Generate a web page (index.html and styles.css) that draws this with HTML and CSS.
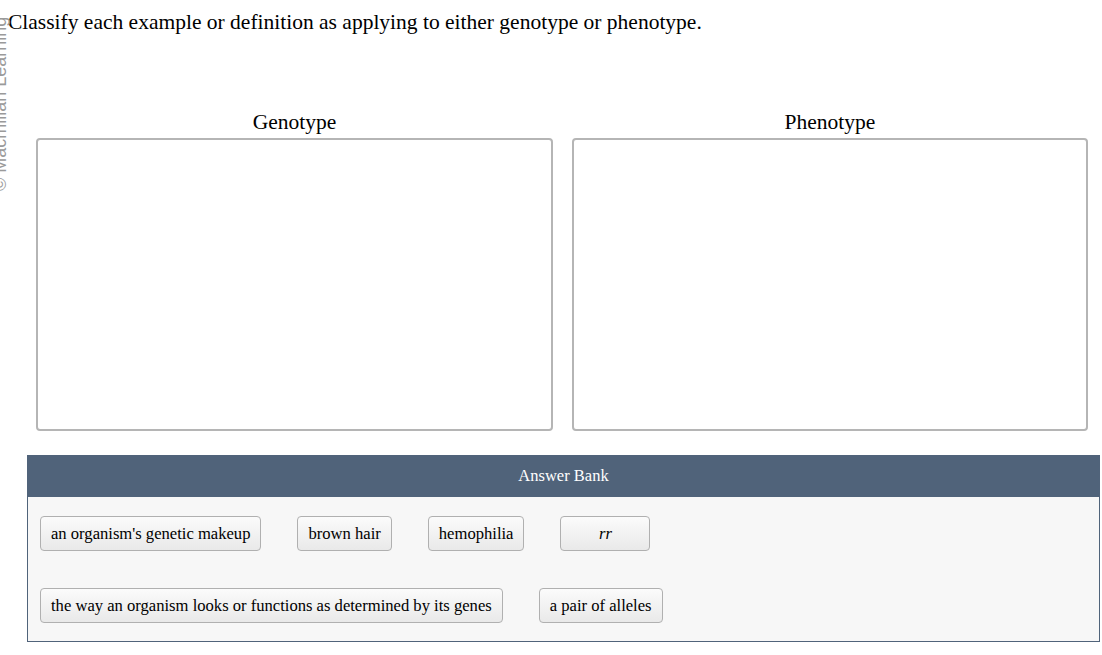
FILE: index.html
```html
<!DOCTYPE html>
<html>
<head>
<meta charset="utf-8">
<link rel="stylesheet" href="styles.css">
</head>
<body>
<div class="page">
  <div class="copyright">© Macmillan Learning</div>
  <h1 class="title">Classify each example or definition as applying to either genotype or phenotype.</h1>
  <div class="bins">
    <div class="bin">
      <div class="bin-label">Genotype</div>
      <div class="bin-box"></div>
    </div>
    <div class="bin">
      <div class="bin-label">Phenotype</div>
      <div class="bin-box"></div>
    </div>
  </div>
  <div class="bank">
    <div class="bank-head">Answer Bank</div>
    <div class="bank-body">
      <div class="chip">an organism's genetic makeup</div>
      <div class="chip">brown hair</div>
      <div class="chip">hemophilia</div>
      <div class="chip chip-rr"><i>rr</i></div>
      <div class="chip">the way an organism looks or functions as determined by its genes</div>
      <div class="chip">a pair of alleles</div>
    </div>
  </div>
</div>
</body>
</html>
```

FILE: styles.css
```css
html, body {
  margin: 0;
  padding: 0;
  background: #ffffff;
}
body {
  font-family: "Liberation Serif", "Times New Roman", serif;
  color: #000;
  overflow: hidden;
}
.page {
  position: relative;
  width: 1102px;
  height: 655px;
}
.copyright {
  position: absolute;
  left: -9px;
  top: 191px;
  transform-origin: 0 0;
  transform: rotate(-90deg);
  font-family: "Liberation Sans", Arial, sans-serif;
  font-size: 18px;
  line-height: 18px;
  color: #9a9a9a;
  white-space: nowrap;
}
.title {
  margin: 0;
  padding: 10px 0 0 8px;
  font-size: 21.5px;
  line-height: 25px;
  font-weight: normal;
}
.bins {
  display: grid;
  grid-template-columns: 517px 516px;
  column-gap: 19px;
  margin: 75px 0 0 36px;
}
.bin-label {
  text-align: center;
  font-size: 21.5px;
  line-height: 24px;
  margin-bottom: 4px;
}
.bin-box {
  height: 289px;
  border: 2px solid #b5b5b5;
  border-radius: 4px;
}
.bank {
  margin: 24px 0 0 27px;
  width: 1071px;
  border: 1px solid #50637a;
  border-top: none;
}
.bank-head {
  background: #50637a;
  color: #ffffff;
  height: 42px;
  line-height: 42px;
  text-align: center;
  font-size: 16.5px;
}
.bank-body {
  background: #f7f7f7;
  display: flex;
  flex-wrap: wrap;
  column-gap: 36px;
  row-gap: 37px;
  padding: 19px 12px 18px 12px;
}
.chip {
  height: 33px;
  line-height: 33px;
  padding: 0 10px;
  font-size: 16.6px;
  border: 1px solid #b0b0b0;
  border-radius: 4px;
  background: linear-gradient(#fbfbfb, #e9e9e9);
  white-space: nowrap;
  text-align: center;
}
.chip-rr {
  width: 68px;
}
```
